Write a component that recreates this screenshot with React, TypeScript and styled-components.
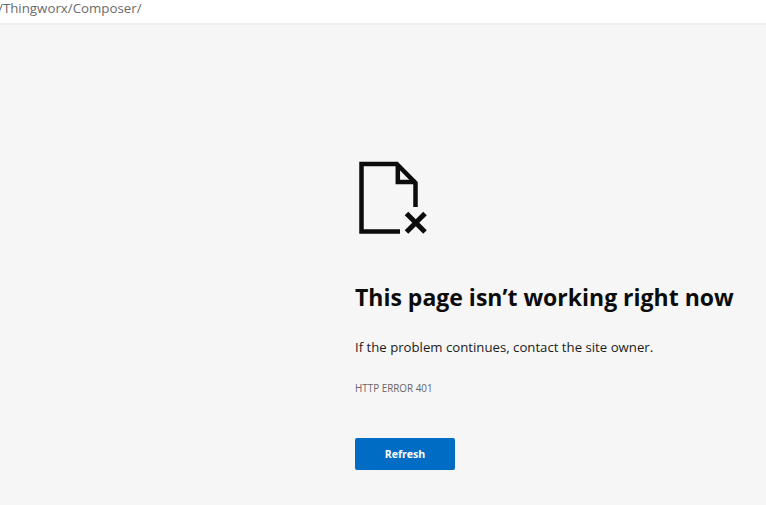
import React from "react";
import styled, { createGlobalStyle } from "styled-components";

const Global = createGlobalStyle`
  html, body { margin: 0; padding: 0; background: #f6f6f6; }
  body { font-family: "Open Sans", "Noto Sans", "Liberation Sans", sans-serif; }
`;

const Page = styled.div`
  width: 766px;
  height: 505px;
  overflow: hidden;
  display: flex;
  flex-direction: column;
  background: #f6f6f6;
`;

const AddressBar = styled.div`
  height: 23px;
  flex: none;
  background: #fff;
  border-bottom: 2px solid #eeeeee;
  color: #6b6b6b;
  font-size: 13.3px;
  line-height: 16px;
  text-indent: -2px;
  white-space: nowrap;
  overflow: hidden;
`;

const Content = styled.main`
  display: flex;
  flex-direction: column;
  align-items: flex-start;
  padding: 136px 0 0 355px;
`;

const FileIcon = styled.svg`
  display: block;
  width: 80px;
  height: 80px;
  flex: none;
`;

const Title = styled.h1`
  margin: 41px 0 0;
  font-size: 23px;
  line-height: 30px;
  font-weight: 700;
  color: #0c0c0c;
  white-space: nowrap;
`;

const Message = styled.p`
  margin: 26px 0 0;
  font-size: 13.2px;
  line-height: 18px;
  color: #1b1b1b;
  white-space: nowrap;
`;

const ErrorCode = styled.div`
  margin: 26px 0 0;
  font-size: 9.9px;
  line-height: 13px;
  font-weight: 400;
  color: #666;
  white-space: nowrap;
`;

const RefreshButton = styled.button`
  margin-top: 43px;
  width: 100px;
  height: 32px;
  border: none;
  border-radius: 2px;
  background: #006cc4;
  color: #fff;
  font-family: inherit;
  font-size: 10.6px;
  font-weight: 700;
  padding: 0;
`;

export default function App() {
  return (
    <Page>
      <Global />
      <AddressBar>/Thingworx/Composer/</AddressBar>
      <Content>
        <FileIcon viewBox="0 0 80 80" fill="none" stroke="#0c0c0c" strokeWidth="4.5">
          <path d="M45 70.5H6.5V3H41.8L60.5 22V46" />
          <path d="M42.8 3V21H60.5" />
          <path d="M51.5 52.5L70 71M70 52.5L51.5 71" strokeWidth="5" />
        </FileIcon>
        <Title>This page isn’t working right now</Title>
        <Message>If the problem continues, contact the site owner.</Message>
        <ErrorCode>HTTP ERROR 401</ErrorCode>
        <RefreshButton>Refresh</RefreshButton>
      </Content>
    </Page>
  );
}
